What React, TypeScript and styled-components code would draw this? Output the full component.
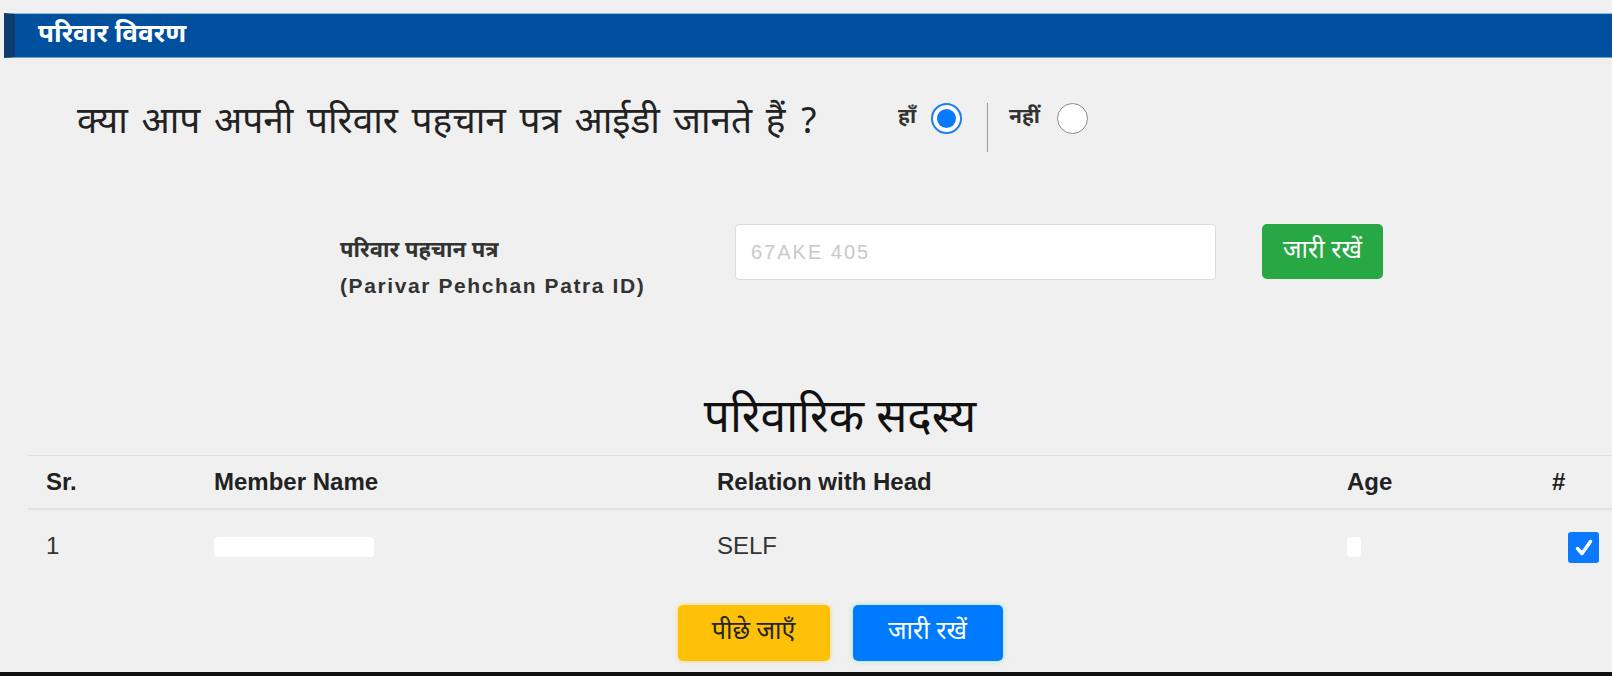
import styled, { createGlobalStyle } from "styled-components";

const GlobalStyle = createGlobalStyle`
  html, body {
    margin: 0;
    padding: 0;
    background: #f0f0f0;
    overflow: hidden;
  }
  body {
    font-family: "Liberation Sans", Arial, "Noto Sans Devanagari", "Lohit Devanagari", "Noto Sans", sans-serif;
    color: #212529;
  }
`;

const hindi = `"Noto Sans Devanagari", "Lohit Devanagari", "Mangal", "FreeSans", "Noto Sans", sans-serif`;

const Page = styled.div`
  width: 1612px;
  height: 676px;
  padding-top: 13px;
  box-sizing: border-box;
  display: flex;
  flex-direction: column;
`;

const HeaderBar = styled.div`
  margin-left: 4px;
  height: 45px;
  box-sizing: border-box;
  display: flex;
  align-items: center;
  background: #00509e;
  border-left: 11px solid #0c3b70;
  border-top: 1px solid #8cbde6;
  border-bottom: 1px solid #6ea3cf;
  padding-left: 23px;
  color: #fff;
  font-family: ${hindi};
  font-weight: 700;
  font-size: 26px;
`;

const QuestionRow = styled.div`
  display: flex;
  align-items: center;
  height: 50px;
  margin-top: 35px;
  padding-left: 77px;
`;

const QuestionText = styled.div`
  width: 821px;
  margin-top: 12px;
  font-family: ${hindi};
  font-size: 37px;
  word-spacing: 4px;
  color: #222;
  white-space: nowrap;
`;

const Option = styled.label<{ $gap?: number }>`
  display: flex;
  align-items: center;
  gap: ${(p) => p.$gap ?? 15}px;
  font-family: ${hindi};
  font-weight: 700;
  font-size: 21px;
  color: #333;
`;

const Radio = styled.span<{ $checked?: boolean }>`
  width: 31px;
  height: 31px;
  box-sizing: border-box;
  border-radius: 50%;
  background: #fff;
  border: ${(p) => (p.$checked ? "2px solid #1b7ef5" : "1.5px solid #8a8a8a")};
  display: flex;
  align-items: center;
  justify-content: center;
  &::after {
    content: "";
    display: ${(p) => (p.$checked ? "block" : "none")};
    width: 19px;
    height: 19px;
    border-radius: 50%;
    background: #0a78ff;
  }
`;

const Divider = styled.span`
  width: 1px;
  height: 49px;
  background: #9a9a9a;
  margin: 10px 21px 0 25px;
  align-self: flex-start;
`;

const IdRow = styled.div`
  display: flex;
  align-items: flex-start;
  margin-top: 81px;
  padding-left: 340px;
`;

const IdLabel = styled.div`
  width: 395px;
  padding-top: 14px;
  color: #333;
`;

const LabelHindi = styled.div`
  font-family: ${hindi};
  font-weight: 700;
  font-size: 22px;
  line-height: 28px;
`;

const LabelEnglish = styled.div`
  margin-top: 6px;
  font-family: "Liberation Sans", Arial, sans-serif;
  font-weight: 700;
  font-size: 21px;
  letter-spacing: 1.6px;
  line-height: 28px;
`;

const IdInput = styled.div`
  width: 481px;
  height: 56px;
  box-sizing: border-box;
  background: #fff;
  border: 1px solid #dcdcdc;
  border-radius: 4px;
  display: flex;
  align-items: center;
  padding-left: 15px;
  font-size: 20px;
  color: #c9c9c9;
  letter-spacing: 2px;
`;

const Button = styled.button<{ $variant: "green" | "yellow" | "blue" }>`
  height: 56px;
  border: none;
  border-radius: 5px;
  font-family: ${hindi};
  font-size: 25px;
  cursor: pointer;
  background: ${(p) =>
    p.$variant === "green" ? "#28a745" : p.$variant === "yellow" ? "#ffc107" : "#007bff"};
  color: ${(p) => (p.$variant === "yellow" ? "#212529" : "#fff")};
  box-shadow: ${(p) =>
    p.$variant === "yellow"
      ? "0 0 4px rgba(255, 193, 7, 0.6)"
      : p.$variant === "blue"
      ? "0 0 5px rgba(90, 220, 160, 0.55)"
      : "none"};
`;

const GreenButton = styled(Button)`
  width: 121px;
  height: 55px;
  margin-left: 46px;
`;

const Content = styled.div`
  margin-left: 28px;
  width: 1624px;
  margin-top: 91px;
`;

const Heading = styled.h2`
  margin: 0 0 4px;
  text-align: center;
  font-family: ${hindi};
  font-weight: 400;
  font-size: 46px;
  line-height: 60px;
  color: #111;
`;

const Table = styled.table`
  width: 100%;
  border-collapse: collapse;
  table-layout: fixed;
  font-family: "Liberation Sans", Arial, sans-serif;
  font-size: 24px;
  border-top: 1px solid #e0e0e0;
`;

const Th = styled.th`
  text-align: left;
  font-weight: 700;
  height: 52px;
  padding: 0 18px;
  color: #222;
  border-bottom: 2px solid #dfe2e5;
`;

const Td = styled.td`
  height: 71px;
  padding: 0 18px;
  color: #333;
  vertical-align: middle;
`;

const Redacted = styled.span<{ $w: number }>`
  display: inline-block;
  width: ${(p) => p.$w}px;
  height: 20px;
  background: #fff;
  border-radius: 4px;
  vertical-align: middle;
`;

const Check = styled.span`
  display: inline-flex;
  align-items: center;
  justify-content: center;
  width: 31px;
  height: 31px;
  margin-left: 16px;
  margin-top: 4px;
  border-radius: 3px;
  background: #0a78ff;
  vertical-align: middle;
`;

const ButtonRow = styled.div`
  display: flex;
  justify-content: center;
  gap: 23px;
  margin-top: 24px;
`;

const BottomStrip = styled.div`
  margin-top: auto;
  height: 4px;
  background: #111;
`;

export default function App() {
  return (
    <>
      <GlobalStyle />
      <Page>
        <HeaderBar>परिवार विवरण</HeaderBar>

        <QuestionRow>
          <QuestionText>क्या आप अपनी परिवार पहचान पत्र आईडी जानते हैं ?</QuestionText>
          <Option>
            हाँ <Radio $checked />
          </Option>
          <Divider />
          <Option $gap={17}>
            नहीं <Radio />
          </Option>
        </QuestionRow>

        <IdRow>
          <IdLabel>
            <LabelHindi>परिवार पहचान पत्र</LabelHindi>
            <LabelEnglish>(Parivar Pehchan Patra ID)</LabelEnglish>
          </IdLabel>
          <IdInput>67AKE 405</IdInput>
          <GreenButton $variant="green">जारी रखें</GreenButton>
        </IdRow>

        <Content>
          <Heading>परिवारिक सदस्य</Heading>
          <Table>
            <colgroup>
              <col style={{ width: 168 }} />
              <col style={{ width: 503 }} />
              <col style={{ width: 630 }} />
              <col style={{ width: 205 }} />
              <col />
            </colgroup>
            <thead>
              <tr>
                <Th>Sr.</Th>
                <Th>Member Name</Th>
                <Th>Relation with Head</Th>
                <Th>Age</Th>
                <Th>#</Th>
              </tr>
            </thead>
            <tbody>
              <tr>
                <Td>1</Td>
                <Td>
                  <Redacted $w={160} />
                </Td>
                <Td>SELF</Td>
                <Td>
                  <Redacted $w={14} />
                </Td>
                <Td>
                  <Check>
                    <svg width="22" height="22" viewBox="0 0 22 22">
                      <path d="M4.5 11.5l4.5 5L17.5 4.5" fill="none" stroke="#fff" strokeWidth="3.5" strokeLinecap="round" strokeLinejoin="round" />
                    </svg>
                  </Check>
                </Td>
              </tr>
            </tbody>
          </Table>
          <ButtonRow>
            <Button $variant="yellow" style={{ width: 152 }}>पीछे जाएँ</Button>
            <Button $variant="blue" style={{ width: 150 }}>जारी रखें</Button>
          </ButtonRow>
        </Content>

        <BottomStrip />
      </Page>
    </>
  );
}
